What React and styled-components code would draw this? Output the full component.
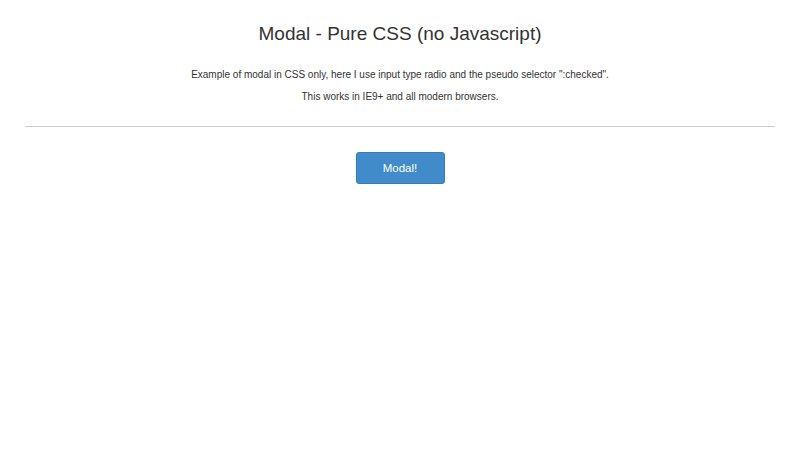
import React from 'react';
import styled, { createGlobalStyle } from 'styled-components';

const GlobalStyle = createGlobalStyle`
  body {
    margin: 0;
    background: #fff;
    font-family: "Liberation Sans", Arial, sans-serif;
    color: #333;
  }
`;

const Page = styled.div`
  padding: 0 25px;
  text-align: center;
`;

const Title = styled.h1`
  font-size: 19px;
  font-weight: 400;
  margin: 0;
  padding-top: 23px;
  line-height: 22px;
`;

const Lead = styled.p`
  font-size: 10px;
  line-height: 17px;
  margin: ${({ first }) => (first ? '21px' : '5px')} 0 0;
`;

const Rule = styled.hr`
  border: 0;
  border-top: 1px solid #ccc;
  margin: 21px 0 25px;
`;

const Button = styled.button`
  width: 89px;
  height: 32px;
  font-family: inherit;
  font-size: 11.5px;
  color: #fff;
  background: #428bca;
  border: 1px solid #357ebd;
  border-radius: 3px;
  cursor: pointer;

  :hover {
    background: #3276b1;
  }
`;

export default function App() {
  return (
    <Page>
      <GlobalStyle />
      <Title>Modal - Pure CSS (no Javascript)</Title>
      <Lead first>
        Example of modal in CSS only, here I use input type radio and the pseudo selector ":checked".
      </Lead>
      <Lead>This works in IE9+ and all modern browsers.</Lead>
      <Rule />
      <Button>Modal!</Button>
    </Page>
  );
}
